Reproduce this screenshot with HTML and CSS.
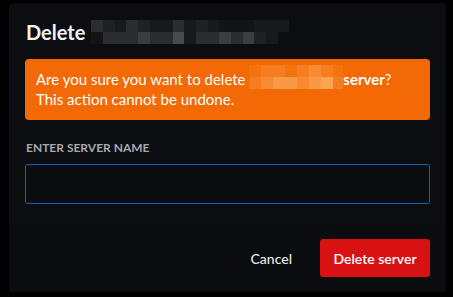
FILE: index.html
```html
<!DOCTYPE html>
<html>
<head>
<meta charset="utf-8">
<link rel="stylesheet" href="styles.css">
</head>
<body>
<div class="modal">
  <div class="body">
    <h2 class="title">Delete <span class="blob blob-title">
      <i class="g3"></i><i class="g2"></i><i class="g1"></i><i class="g3"></i><i class="g2"></i><i class="g1"></i><i class="g1"></i><i class="g3"></i><i class="g1"></i><i class="g2"></i><i class="g1"></i><i class="g0"></i><i class="g0"></i><i class="g0"></i><i class="g1"></i><i class="g1"></i><i class="g1"></i>
      <i class="g0"></i><i class="g3"></i><i class="g3"></i><i class="g3"></i><i class="g4"></i><i class="g3"></i><i class="g3"></i><i class="g5"></i><i class="g1"></i><i class="g3"></i><i class="g3"></i><i class="g4"></i><i class="g3"></i><i class="g4"></i><i class="g2"></i><i class="g1"></i><i class="gx"></i>
    </span></h2>
    <div class="warning">Are you sure you want to delete <span class="blob-warn"></span> <strong>server</strong>? This action cannot be undone.</div>
    <label class="label" for="name">Enter server name</label>
    <input class="input" id="name" type="text">
  </div>
  <div class="footer">
    <button class="btn-link">Cancel</button>
    <button class="btn-danger">Delete server</button>
  </div>
</div>
</body>
</html>
```
FILE: styles.css
```css
html, body {
  margin: 0;
  background: #000;
}
body {
  padding: 3px 7px 5px 9px;
  font-family: Lato, "Noto Sans", sans-serif;
}
.modal {
  width: 437px;
  height: 289px;
  background: #0c0d10;
  border-radius: 4px;
  display: flex;
  flex-direction: column;
  box-sizing: border-box;
}
.body {
  padding: 16px 16px 0;
  display: flex;
  flex-direction: column;
}
.title {
  margin: 0;
  font-size: 20px;
  line-height: 24px;
  font-weight: 700;
  color: #f2f3f5;
  padding-left: 1px;
  display: flex;
  align-items: center;
  gap: 6px;
  height: 26px;
}
.blob {
  display: inline-grid;
  grid-auto-rows: 12px;
}
.blob i { display: block; }
.blob-title {
  grid-template-columns: repeat(17, 11.65px);
}
.g0 { background: #131416; }
.g1 { background: #18191b; }
.g2 { background: #202124; }
.g3 { background: #2b2c2f; }
.g4 { background: #3c3d40; }
.g5 { background: #48494c; }
.gx { background: transparent; }

.blob-warn {
  padding: 5px 0 1px 94px;
  background-image:
    linear-gradient(to right, #f4730f 0 12px, #f67e20 12px 24px, #f67e20 24px 36px, #f4730f 36px 48px, #f67e20 48px 60px, #f78b32 60px 72px, #f67e20 72px 84px, #f4730f 84px 94px),
    linear-gradient(to right, #f67e20 0 12px, #f78b32 12px 24px, #f89a45 24px 36px, #f89a45 36px 48px, #f78b32 48px 60px, #f89a45 60px 72px, #f9a552 72px 84px, #f67e20 84px 94px);
  background-size: 94px 50%, 94px 50%;
  background-position: left top, left bottom;
  background-repeat: no-repeat;
}

.warning {
  margin-top: 14px;
  background: #f26905;
  border-radius: 4px;
  color: #fff;
  font-size: 15px;
  line-height: 20px;
  padding: 10px 10px 11px 11px;
}
.warning strong { font-weight: 700; }
.label {
  margin-top: 20px;
  font-size: 12px;
  line-height: 16px;
  font-weight: 700;
  text-transform: uppercase;
  color: #a6a9ae;
  padding-left: 1px;
}
.input {
  margin-top: 8px;
  height: 40px;
  box-sizing: border-box;
  background: #0b0c0e;
  border: 1px solid #145fbd;
  border-radius: 3px;
  outline: none;
  color: #fff;
  font-family: inherit;
}
.footer {
  margin-top: auto;
  height: 68px;
  box-sizing: border-box;
  padding: 0 16px;
  display: flex;
  justify-content: flex-end;
  align-items: center;
  gap: 12px;
  background: #0b0c0f;
  border-radius: 0 0 4px 4px;
}
.btn-link {
  background: none;
  border: none;
  color: #e6e7e9;
  font-family: inherit;
  font-size: 14px;
  font-weight: 500;
  padding: 0 16px;
  height: 38px;
}
.btn-danger {
  background: #d81113;
  color: #fff;
  border: none;
  border-radius: 3px;
  font-family: inherit;
  font-size: 14px;
  font-weight: 600;
  height: 38px;
  width: 110px;
  padding: 0;
  white-space: nowrap;
}
```
